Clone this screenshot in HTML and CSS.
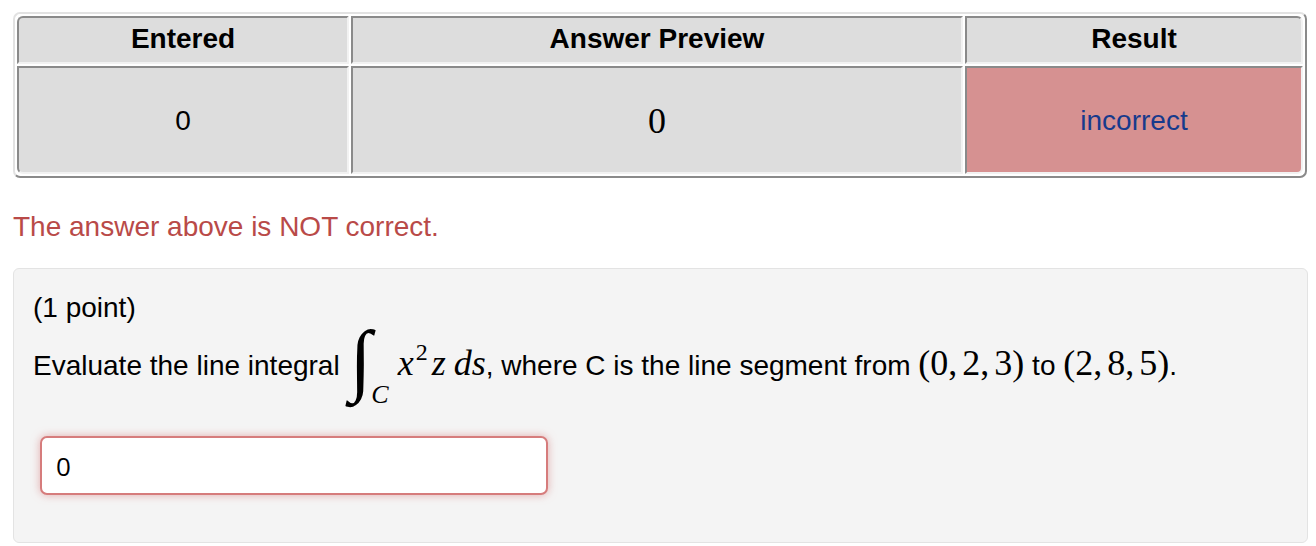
FILE: index.html
```html
<!DOCTYPE html>
<html lang="en">
<head>
    <meta charset="UTF-8">
    <title>Problem 4</title>
    <link rel="stylesheet" href="styles.css">
</head>
<body>
    <table class="attempt-results">
        <colgroup>
            <col class="col-entered">
            <col class="col-preview">
            <col class="col-result">
        </colgroup>
        <tr>
            <th class="corner-tl">Entered</th>
            <th>Answer Preview</th>
            <th class="corner-tr">Result</th>
        </tr>
        <tr>
            <td class="corner-bl">0</td>
            <td class="preview"><span class="mn">0</span></td>
            <td class="result-error corner-br">incorrect</td>
        </tr>
    </table>

    <p class="attempt-message">The answer above is NOT correct.</p>

    <div class="problem-well">
        <p class="points">(1 point)</p>
        <p class="question">
            Evaluate the line integral
            <span class="math"><span class="int">&#8747;</span><span class="int-sub">C</span><span class="mi">x</span><span class="sup">2</span><span class="mi z">z</span><span class="mi d">d</span><span class="mi">s</span></span>, where C is the line segment from
            <span class="math"><span class="mn">(0,</span><span class="mn">2,</span><span class="mn">3)</span></span> to
            <span class="math"><span class="mn">(2,</span><span class="mn">8,</span><span class="mn">5)</span></span>.
        </p>
        <input class="answer-input" type="text" value="0">
    </div>
</body>
</html>
```

FILE: styles.css
```css
* {
    box-sizing: border-box;
    margin: 0;
    padding: 0;
}

body {
    font-family: "Liberation Sans", Arial, sans-serif;
    font-size: 28px;
    color: #000;
    background: #fff;
    padding: 12px 9px 0 13px;
}

/* results table */
.attempt-results {
    width: 1294px;
    table-layout: fixed;
    border-collapse: separate;
    border-spacing: 2px;
    border-style: solid;
    border-width: 2px;
    border-color: #e2e2e2 #8a8a8a #8a8a8a #e2e2e2;
    border-radius: 7px;
}

.col-entered { width: 332px; }
.col-preview { width: 612px; }
.col-result { width: 338px; }

.attempt-results th,
.attempt-results td {
    background: #dddddd;
    text-align: center;
    border-style: solid;
    border-width: 2px;
    border-color: #8a8a8a #f2f2f2 #f2f2f2 #8a8a8a;
}

.attempt-results th {
    height: 48px;
    padding-bottom: 2px;
    font-weight: bold;
}

.attempt-results td {
    height: 108px;
    padding-top: 2px;
}

.corner-tl { border-top-left-radius: 6px; }
.corner-tr { border-top-right-radius: 6px; }
.corner-bl { border-bottom-left-radius: 6px; }
.corner-br { border-bottom-right-radius: 6px; }

.attempt-results td.preview .mn {
    font-size: 36px;
}

.attempt-results td.result-error {
    background: #d69191;
    color: #173a8c;
}

.attempt-message {
    color: #b94a48;
    line-height: 40px;
    margin: 29px 0 21px;
}

/* problem body */
.problem-well {
    width: 1295px;
    background: #f4f4f4;
    border: 1px solid #e3e3e3;
    border-radius: 6px;
    padding: 19px 19px 47px 19px;
}

.points {
    line-height: 40px;
    margin-bottom: 18px;
}

.question {
    line-height: 40px;
    margin-bottom: 41px;
    white-space: nowrap;
}

.math {
    font-family: "Liberation Serif", "Times New Roman", serif;
    font-size: 36px;
    line-height: 0;
    white-space: nowrap;
}

.mi {
    font-style: italic;
}

.mn {
    font-family: "Liberation Serif", "Times New Roman", serif;
    margin-right: 5px;
}

.mn:last-child {
    margin-right: 0;
}

.int {
    display: inline-block;
    font-size: 80px;
    line-height: 0;
    vertical-align: -11px;
    margin-left: 2px;
}

.int-sub {
    font-style: italic;
    font-size: 26px;
    vertical-align: -28px;
    margin-left: 0;
    margin-right: 9px;
}

.sup {
    font-size: 24px;
    vertical-align: 15px;
    margin-left: 2px;
}

.z { margin-left: 4px; }
.d { margin-left: 8px; }

.answer-input {
    display: block;
    margin-left: 7px;
    width: 508px;
    height: 59px;
    padding: 0 14px;
    font-family: "Open Sans", sans-serif;
    font-size: 26px;
    color: #000;
    background: #fff;
    border: 2px solid #d67c7c;
    border-radius: 7px;
    box-shadow: 0 0 8px rgba(214, 124, 124, 0.6);
    outline: none;
}
```
